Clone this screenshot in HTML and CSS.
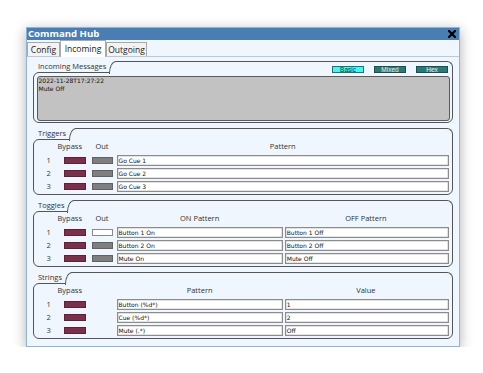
FILE: index.html
```html
<!DOCTYPE html>
<html>
<head>
<meta charset="utf-8">
<link rel="stylesheet" href="styles.css">
</head>
<body>
<div class="window">
  <div class="titlebar">
    <span class="title">Command Hub</span>
    <svg class="close" viewBox="0 0 8 8"><path d="M1 1L7 7M7 1L1 7" stroke="#000" stroke-width="2.2" stroke-linecap="square"/></svg>
  </div>
  <div class="tabs">
    <div class="tab t-config">Config</div>
    <div class="tab t-incoming active">Incoming</div>
    <div class="tab t-outgoing">Outgoing</div>
  </div>
  <div class="panel">
    <section class="group">
      <div class="ghead">
        <div class="glabel">Incoming Messages</div>
        <div class="gext modes">
          <span class="mode basic">Basic</span>
          <span class="mode">Mixed</span>
          <span class="mode">Hex</span>
        </div>
      </div>
      <div class="gbody msgbody">
        <div class="msgbox">2022-11-28T17:27:22<br>Mute Off</div>
      </div>
    </section>

    <section class="group">
      <div class="ghead">
        <div class="glabel">Triggers</div>
        <div class="gext"></div>
      </div>
      <div class="gbody table one">
        <div class="h"></div><div class="h hb">Bypass</div><div class="h ho">Out</div><div class="h">Pattern</div>
        <div class="n">1</div><div class="sw by"></div><div class="sw out"></div><div class="inp">Go Cue 1</div>
        <div class="n">2</div><div class="sw by"></div><div class="sw out"></div><div class="inp">Go Cue 2</div>
        <div class="n">3</div><div class="sw by"></div><div class="sw out"></div><div class="inp">Go Cue 3</div>
      </div>
    </section>

    <section class="group">
      <div class="ghead">
        <div class="glabel">Toggles</div>
        <div class="gext"></div>
      </div>
      <div class="gbody table two">
        <div class="h"></div><div class="h hb">Bypass</div><div class="h ho">Out</div><div class="h">ON Pattern</div><div class="h">OFF Pattern</div>
        <div class="n">1</div><div class="sw by"></div><div class="sw out on"></div><div class="inp">Button 1 On</div><div class="inp">Button 1 Off</div>
        <div class="n">2</div><div class="sw by"></div><div class="sw out"></div><div class="inp">Button 2 On</div><div class="inp">Button 2 Off</div>
        <div class="n">3</div><div class="sw by"></div><div class="sw out"></div><div class="inp">Mute On</div><div class="inp">Mute Off</div>
      </div>
    </section>

    <section class="group">
      <div class="ghead">
        <div class="glabel">Strings</div>
        <div class="gext"></div>
      </div>
      <div class="gbody table two">
        <div class="h"></div><div class="h hb">Bypass</div><div class="h ho"></div><div class="h">Pattern</div><div class="h">Value</div>
        <div class="n">1</div><div class="sw by"></div><div></div><div class="inp">Button (%d*)</div><div class="inp">1</div>
        <div class="n">2</div><div class="sw by"></div><div></div><div class="inp">Cue (%d*)</div><div class="inp">2</div>
        <div class="n">3</div><div class="sw by"></div><div></div><div class="inp">Mute (.*)</div><div class="inp">Off</div>
      </div>
    </section>
  </div>
</div>
</body>
</html>
```

FILE: styles.css
```css
* { box-sizing: border-box; }

body {
  margin: 0;
  background: #ffffff;
  font-family: "Open Sans", "Noto Sans", sans-serif;
  color: #333;
}

.window {
  margin: 27px 0 0 26px;
  width: 434px;
  height: 320px;
  border: 1px solid #8fb3d9;
  background: #eff6fd;
  box-shadow: 0 3px 12px rgba(0, 0, 0, 0.32);
  display: flex;
  flex-direction: column;
}

.titlebar {
  height: 12px;
  background: #4a7eb3;
  display: flex;
  align-items: center;
  justify-content: space-between;
  padding: 0 3px 0 1px;
}

.title {
  color: #fff;
  font-weight: 700;
  font-size: 9.6px;
  line-height: 12px;
}

.close {
  width: 8px;
  height: 8px;
  display: block;
}

.tabs {
  display: flex;
  align-items: flex-end;
  height: 17px;
  border-bottom: 1px solid #b8c8d8;
}

.tab {
  font-size: 8.5px;
  line-height: 13px;
  height: 14px;
  text-align: center;
  border: 1px solid #a8a8a8;
  border-bottom: none;
  background: #f3f3f3;
  color: #222;
  white-space: nowrap;
}

.t-config { width: 33px; }
.t-incoming { width: 46px; }
.t-outgoing { width: 41px; }

.tab.active {
  height: 17px;
  line-height: 15px;
  background: #fff;
  margin-bottom: -1px;
}

.panel {
  flex: 1;
  padding: 4px 6px 0 6px;
  display: flex;
  flex-direction: column;
  gap: 5px;
}

.group {
  display: flex;
  flex-direction: column;
}

.ghead {
  display: flex;
  height: 11px;
}

.glabel {
  font-size: 7.5px;
  line-height: 11px;
  padding: 0 3px 0 5px;
  color: #333;
}

.gext {
  flex: 1;
  height: 12.5px;
  margin-bottom: -1.5px;
  border: 1.5px solid #555;
  border-bottom: none;
  border-top-left-radius: 7px 12px;
  border-top-right-radius: 6px;
  background: #eff6fd;
  position: relative;
  z-index: 1;
}

.gbody {
  border: 1.5px solid #555;
  border-radius: 6px 0 6px 6px;
}

.modes {
  display: flex;
  justify-content: flex-end;
  align-items: flex-start;
  gap: 10px;
  padding: 3.5px 4px 0 0;
}

.mode {
  width: 32px;
  height: 7px;
  background: #2a7a78;
  border: 1px solid #1b4f4d;
  color: #e6f2f2;
  font-family: "Liberation Sans", sans-serif;
  font-size: 6.5px;
  line-height: 5px;
  text-align: center;
}

.mode.basic {
  background: #3ff7f7;
  border-color: #2a6f6f;
  color: #0f3a3a;
}

.msgbody {
  height: 51px;
  padding: 2.5px 2px 1px 2.5px;
}

.msgbox {
  height: 100%;
  background: #c2c2c2;
  border: 1px solid #5a5a5a;
  border-radius: 3px;
  font-family: "DejaVu Sans", sans-serif;
  font-size: 6px;
  line-height: 8px;
  color: #111;
  padding: 0.5px 0 0 1px;
}

.table {
  height: 56px;
  display: grid;
  grid-template-rows: 10.5px 11px 11px 11px;
  row-gap: 2px;
  padding: 2px 3px 0 0;
  align-items: center;
}

.table.one {
  grid-template-columns: 29.5px 28px 25px 1fr;
}

.table.two {
  grid-template-columns: 29.5px 28px 25px 1fr 1fr;
  column-gap: 0;
}

.table.two .inp + .inp {
  margin-left: 2px;
}

.h {
  font-size: 7.5px;
  line-height: 9px;
  align-self: start;
  text-align: center;
  color: #333;
}

.hb {
  text-align: left;
  margin-left: -6px;
}

.ho {
  width: 21px;
}

.n {
  font-size: 7.5px;
  text-align: center;
  color: #333;
  line-height: 11px;
}

.sw {
  height: 7px;
}

.sw.by {
  width: 22px;
  background: #7a2f4a;
  border: 1px solid #5b2236;
}

.sw.out {
  width: 21px;
  background: #7e7e7e;
  border: 1px solid #616161;
}

.sw.out.on {
  background: #ffffff;
  border-color: #8a8a8a;
}

.inp {
  height: 11px;
  background: #fff;
  border: 1px solid #8c8c8c;
  box-shadow: inset 0 0 0 0.5px #c8c8c8;
  font-family: "DejaVu Sans", sans-serif;
  font-size: 6px;
  line-height: 9px;
  padding-left: 1px;
  color: #111;
  white-space: nowrap;
  overflow: hidden;
}
```
